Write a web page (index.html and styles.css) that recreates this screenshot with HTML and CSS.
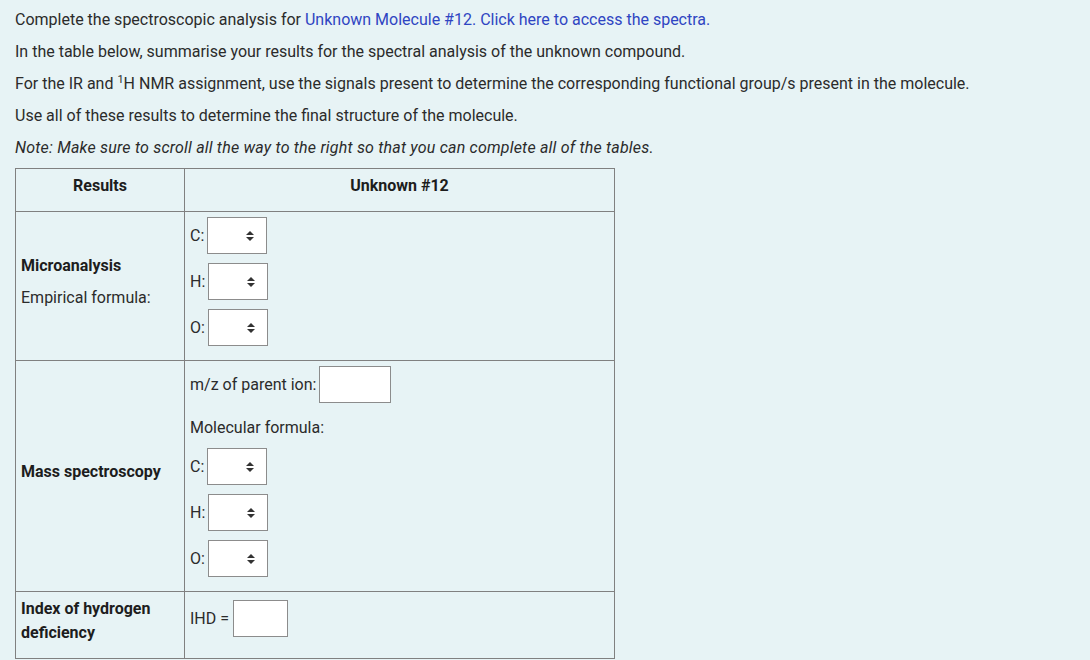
FILE: index.html
```html
<!DOCTYPE html>
<html lang="en">
<head>
<meta charset="utf-8">
<title>Spectroscopic analysis</title>
<link rel="stylesheet" href="styles.css">
</head>
<body>
<div class="page">
  <p>Complete the spectroscopic analysis for <a class="link" href="#">Unknown Molecule #12. Click here to access the spectra.</a></p>
  <p>In the table below, summarise your results for the spectral analysis of the unknown compound.</p>
  <p>For the IR and <sup class="sup">1</sup>H NMR assignment, use the signals present to determine the corresponding functional group/s present in the molecule.</p>
  <p>Use all of these results to determine the final structure of the molecule.</p>
  <p><em class="note">Note: Make sure to scroll all the way to the right so that you can complete all of the tables.</em></p>

  <table class="results">
    <colgroup><col class="col-a"><col class="col-b"></colgroup>
    <tr>
      <th><p>Results</p></th>
      <th><p>Unknown #12</p></th>
    </tr>
    <tr>
      <td class="label"><p><strong>Microanalysis</strong></p><p>Empirical formula:</p></td>
      <td class="fields">
        <div class="field"><span class="lbl">C:</span><span class="sel"><select></select></span></div>
        <div class="field"><span class="lbl">H:</span><span class="sel"><select></select></span></div>
        <div class="field"><span class="lbl">O:</span><span class="sel"><select></select></span></div>
      </td>
    </tr>
    <tr>
      <td class="label"><p><strong>Mass spectroscopy</strong></p></td>
      <td class="fields">
        <div class="field"><span class="lbl">m/z of parent ion:</span><input class="box mz" type="text"></div>
        <div class="heading">Molecular formula:</div>
        <div class="field"><span class="lbl">C:</span><span class="sel"><select></select></span></div>
        <div class="field"><span class="lbl">H:</span><span class="sel"><select></select></span></div>
        <div class="field"><span class="lbl">O:</span><span class="sel"><select></select></span></div>
      </td>
    </tr>
    <tr>
      <td class="label"><p><strong>Index of hydrogen deficiency</strong></p></td>
      <td class="fields ihd">
        <div class="field last"><span class="lbl">IHD =</span><input class="box ihd-box" type="text"></div>
      </td>
    </tr>
  </table>
</div>
</body>
</html>
```
FILE: styles.css
```css
html, body {
  margin: 0;
  padding: 0;
  background: #e7f3f5;
}
body {
  padding: 8px 0 0 15px;
  font-family: Roboto, "Liberation Sans", sans-serif;
  font-size: 16px;
  line-height: 24px;
  color: #2b2b2b;
}
p {
  margin: 0 0 8px;
}
.link {
  color: #2f45c2;
  text-decoration: none;
}
.note {
  letter-spacing: 0.2px;
}
.sup {
  font-size: 11px;
  line-height: 0;
  vertical-align: 6px;
}
.results {
  border-collapse: collapse;
  table-layout: fixed;
  width: 600px;
}
.col-a { width: 169px; }
.results th,
.results td {
  border: 1px solid #808080;
  padding: 5px;
}
.results th {
  font-weight: 700;
  text-align: center;
  vertical-align: top;
  color: #1d1d1d;
}
.results strong {
  color: #1d1d1d;
}
.label {
  vertical-align: middle;
}
.fields {
  vertical-align: top;
}
.field {
  display: flex;
  align-items: flex-start;
  height: 38px;
  margin-bottom: 8px;
}
.field.last {
  margin-bottom: 0;
}
.lbl {
  line-height: 37px;
  margin-right: 3px;
}
.heading {
  padding-top: 4px;
  margin-bottom: 8px;
}
.sel {
  position: relative;
  display: inline-block;
  width: 60px;
  height: 37px;
}
.sel select {
  -webkit-appearance: none;
  appearance: none;
  box-sizing: border-box;
  width: 60px;
  height: 37px;
  margin: 0;
  border: 1px solid #8c8c8c;
  border-radius: 0;
  background: #ffffff;
}
.sel::before,
.sel::after {
  content: "";
  position: absolute;
  left: 39px;
  width: 0;
  height: 0;
  border-left: 4px solid transparent;
  border-right: 4px solid transparent;
  pointer-events: none;
}
.sel::before {
  top: 14px;
  border-bottom: 4px solid #333333;
}
.sel::after {
  top: 20px;
  border-top: 4px solid #333333;
}
.box {
  box-sizing: border-box;
  height: 37px;
  margin: 0;
  border: 1px solid #8c8c8c;
  border-radius: 0;
  background: #ffffff;
  padding: 0 4px;
}
.mz { width: 72px; }
.ihd-box { width: 55px; margin-left: 1px; }
.results td.ihd {
  padding-top: 8px;
}
```
